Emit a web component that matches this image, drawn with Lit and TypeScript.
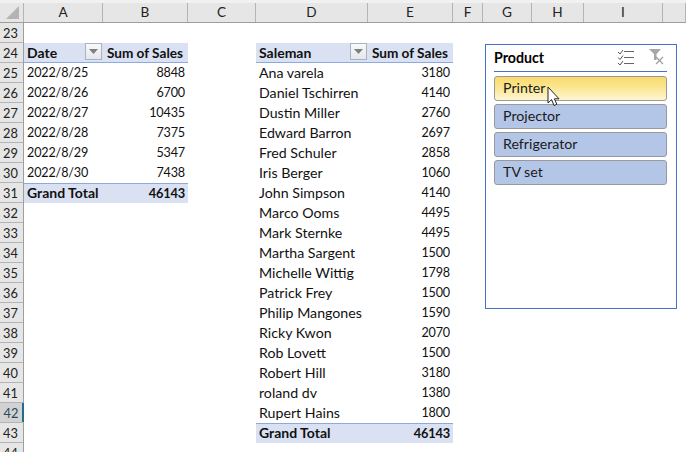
import { LitElement, html, css, svg } from "lit";
import { customElement } from "lit/decorators.js";

const COLS: [string, number][] = [["A",79],["B",85],["C",68],["D",112],["E",85],["F",30],["G",49],["H",52],["I",79],["",23]];
const ROWS = Array.from({length:22},(_,i)=>23+i);
const DATES: [string,number][] = [["2022/8/25",8848],["2022/8/26",6700],["2022/8/27",10435],["2022/8/28",7375],["2022/8/29",5347],["2022/8/30",7438]];
const PEOPLE: [string,number][] = [["Ana varela",3180],["Daniel Tschirren",4140],["Dustin Miller",2760],["Edward Barron",2697],["Fred Schuler",2858],["Iris Berger",1060],["John Simpson",4140],["Marco Ooms",4495],["Mark Sternke",4495],["Martha Sargent",1500],["Michelle Wittig",1798],["Patrick Frey",1500],["Philip Mangones",1590],["Ricky Kwon",2070],["Rob Lovett",1500],["Robert Hill",3180],["roland dv",1380],["Rupert Hains",1800]];
const PRODUCTS = ["Printer","Projector","Refrigerator","TV set"];

@customElement("app-root")
export class AppRoot extends LitElement {
  static styles = css`
    :host { display:block; width:686px; height:452px; overflow:hidden; position:relative; background:#fff;
      font-family:"Lato","Carlito",sans-serif; font-size:14.2px; color:#111; }
    .head { display:flex; height:23px; box-sizing:border-box; padding-top:3px; background:linear-gradient(#f1f1f1 0 3px,#e6e6e6 3px); border-bottom:1px solid #9e9e9e; background-origin:border-box; }
    .head .corner { width:24px; flex:none; box-sizing:border-box; border-right:1px solid #b4b4b4; display:flex; justify-content:flex-end; align-items:flex-end; padding:0 4px 3px 0; }
    .head .col { flex:none; box-sizing:border-box; border-right:1px solid #b4b4b4; text-align:center; line-height:19px; color:#222; font-size:13.6px; }
    .body { display:flex; }
    .gutter { width:24px; flex:none; box-sizing:border-box; background:#e6e6e6; border-right:1px solid #9e9e9e; }
    .rownum { height:20px; box-sizing:border-box; border-bottom:1px solid #b4b4b4; text-align:center; line-height:20px; color:#222; padding-right:2px; position:relative; font-size:12.8px; }
    .rownum.sel { background:#d2d2d2; color:#2b4a5c; box-shadow:inset -2px 0 0 #1f6f8b; margin-right:-1px; }
    .sheet { flex:none; display:grid; grid-template-columns:79px 85px 68px 112px 85px; grid-auto-rows:20px; align-content:start; }
    .pivot { display:grid; grid-auto-rows:20px; grid-row:2 / span 20; align-content:start; }
    .p1 { grid-column:1 / span 2; grid-template-columns:79px 85px; }
    .p2 { grid-column:4 / span 2; grid-template-columns:112px 85px; }
    .c { line-height:20px; padding:0 3px; white-space:nowrap; display:flex; justify-content:space-between; align-items:center; box-sizing:border-box; min-width:0; }
    .n { justify-content:flex-end; }
    .num { font-size:12.6px; letter-spacing:-.15px; }
    .hd { background:#d9e1f2; font-weight:700; font-size:14px; border-bottom:1px solid #8ea9db; }
    .hd.lab { padding-right:1px; }
    .hd.n { padding-right:5px; font-size:13.6px; }
    .tot { background:#d9e1f2; font-weight:700; font-size:14px; border-top:1px solid #8ea9db; padding-bottom:1px; }
    .tot.num { font-size:12.8px; letter-spacing:-.15px; padding-right:3px; }
    .btn { width:17px; height:17px; box-sizing:border-box; flex:none; border:1px solid #a9b3bd; background:linear-gradient(#f9f9f9,#e4e7ec); display:flex; align-items:center; justify-content:center; align-self:flex-start; }
    .slicer { position:absolute; left:485px; top:44px; width:192px; height:265px; box-sizing:border-box; border:1px solid #4472c4; background:#fff; padding:3px 9px 0 8px; }
    .sh { display:flex; align-items:center; height:18px; font-weight:700; color:#000; border-bottom:1px solid #4472c4; padding-bottom:5px; margin-bottom:4px; box-sizing:content-box; }
    .sh .t { flex:1; }
    .sh svg { display:block; }
    .items { display:flex; flex-direction:column; gap:3px; }
    .item { height:25px; box-sizing:border-box; border:1px solid #999; border-radius:3px; background:#b4c6e7; padding-left:8px; line-height:22px; color:#1a1a1a; }
    .item.on { background:linear-gradient(#f9dc6d 0%,#fbe68f 45%,#fdf6d4 100%); }
    .cursor { position:absolute; left:547px; top:86px; }
  `;
  pivot(cls:string,label:string,data:[string,number][],dates=false) {
    return html`<div class="pivot ${cls}">
      <div class="c hd lab"><span>${label}</span><span class="btn"><svg width="9" height="5"><path d="M0 0H9L4.5 5Z" fill="#7f7f7f"/></svg></span></div>
      <div class="c hd n">Sum of Sales</div>
      ${data.map(([a,b])=>html`<div class="c ${dates?"num":""}">${a}</div><div class="c n num">${b}</div>`)}
      <div class="c tot">Grand Total</div><div class="c tot n num">46143</div>
    </div>`;
  }
  render() {
    return html`
      <div class="head">
        <div class="corner"><svg width="13" height="13"><path d="M13 0V13H0Z" fill="#b4b4b4"/></svg></div>
        ${COLS.map(([n,w])=>html`<div class="col" style="width:${w}px">${n}</div>`)}
      </div>
      <div class="body">
        <div class="gutter">${ROWS.map(r=>html`<div class="rownum ${r===42?"sel":""}">${r}</div>`)}</div>
        <div class="sheet">
          ${this.pivot("p1","Date",DATES,true)}
          ${this.pivot("p2","Saleman",PEOPLE)}
        </div>
      </div>
      <div class="slicer">
        <div class="sh"><span class="t">Product</span>
          <svg width="17" height="16" style="margin-right:15px" fill="none" stroke="#666" stroke-width="1">
            ${svg`<path d="M1 3l2 2 3-4M1 8.5l2 2 3-4M1 14l2 2 3-4" stroke="#555"/><path d="M7 2.5h10M7 8.5h10M7 14.5h10"/>`}
          </svg>
          <svg width="16" height="16" style="margin-right:2px">
            ${svg`<path d="M0 0H12L7.5 5V11H5V5Z" fill="#a6a6a6"/><path d="M7 8l7 7M14 8l-7 7" stroke="#a0a0a0" stroke-width="1.3" fill="none"/>`}
          </svg>
        </div>
        <div class="items">${PRODUCTS.map((p,i)=>html`<div class="item ${i===0?"on":""}">${p}</div>`)}</div>
      </div>
      <svg class="cursor" width="14" height="22">${svg`<path d="M1 1V17L4.6 13.6L7 19.5L9.8 18.3L7.4 12.8H12Z" fill="#fff" stroke="#222" stroke-width="1"/>`}</svg>
    `;
  }
}
